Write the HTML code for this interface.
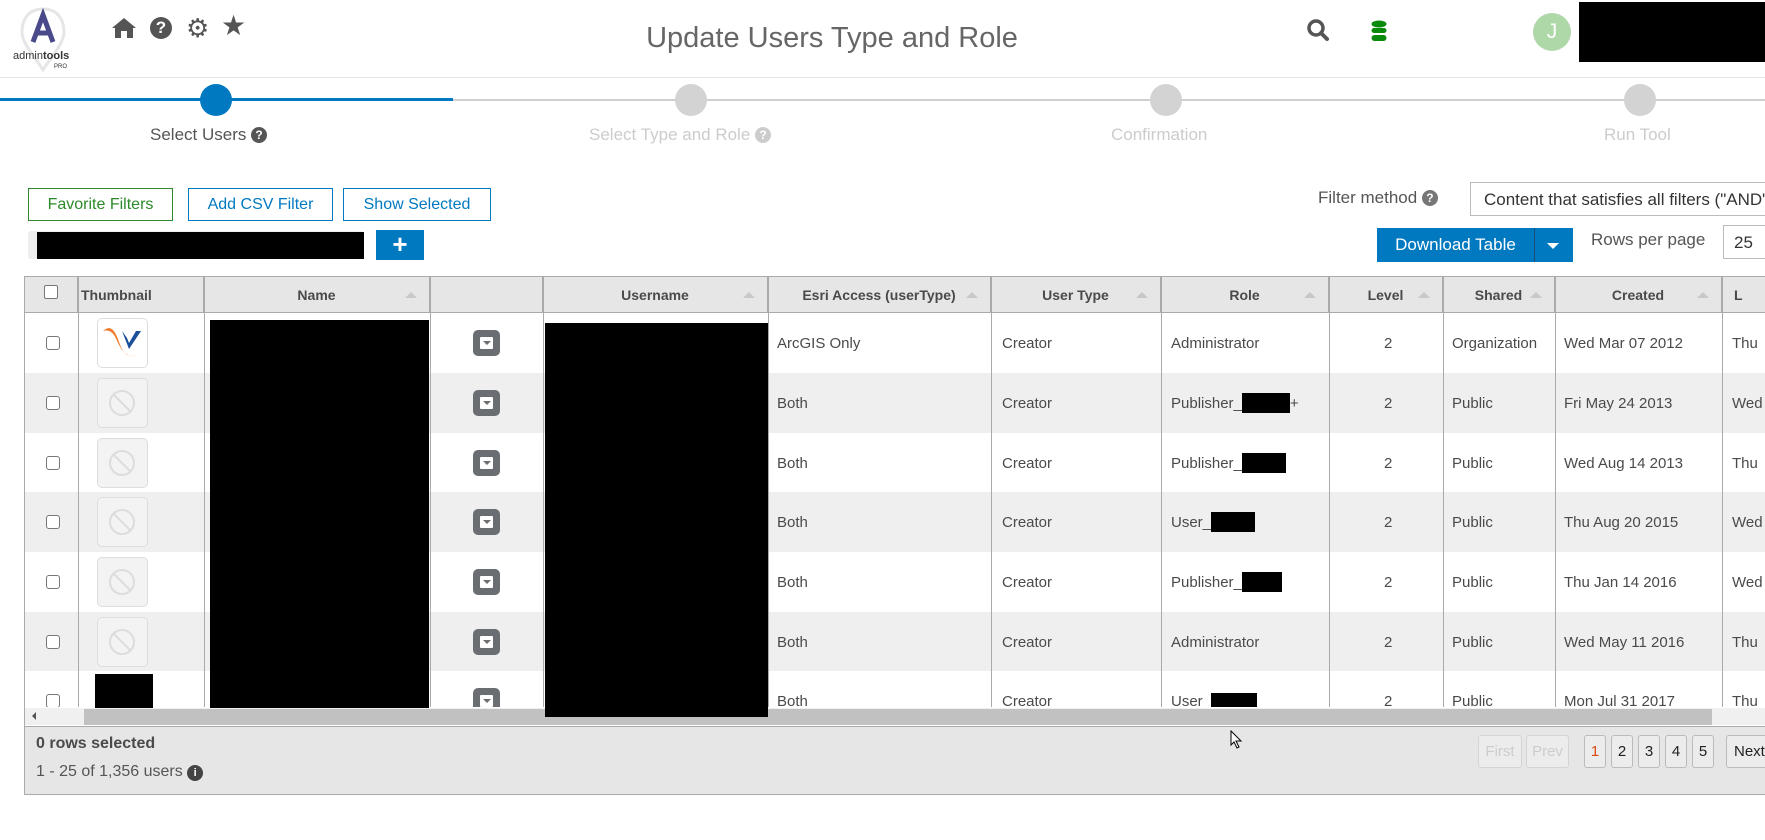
<!DOCTYPE html>
<html><head><meta charset="utf-8">
<style>
*{box-sizing:border-box;margin:0;padding:0}
body{width:1765px;height:840px;overflow:hidden;background:#fff;font-family:"Liberation Sans",sans-serif;color:#4a4a4a;position:relative}
.a{position:absolute}
.btn{position:absolute;border:1px solid #0079c1;color:#0079c1;font-size:16px;display:flex;align-items:center;justify-content:center;background:#fff}
.th{position:absolute;top:277px;height:35px;background:#e6e6e6;font-weight:bold;font-size:14px;color:#4a4a4a;display:flex;align-items:center;justify-content:center;border-right:1px solid #aaa}
.tri{position:absolute;right:12px;top:15px;width:0;height:0;border-left:6px solid transparent;border-right:6px solid transparent;border-bottom:6px solid #c8c8c8}
.row{position:absolute;left:25px;width:1740px;height:60px}
.c{position:absolute;font-size:15px;color:#4a4a4a;top:0;height:60px;display:flex;align-items:center}
.vl{position:absolute;top:277px;height:430px;width:1px;background:#aaa}
.cb{position:absolute;left:21px;top:23px;width:14px;height:14px;border:1px solid #777;border-radius:3px;background:#fff}
.thumb{position:absolute;left:72px;top:5px;width:51px;height:50px;border:1px solid #ddd;border-radius:5px;background:#f3f3f3}
.dd{position:absolute;left:448px;top:17px;width:27px;height:26px;background:#6a6e73;border-radius:5px}
.dd:after{content:"";position:absolute;left:7px;top:7px;width:13px;height:12px;background:#fff;border-radius:1px}
.dd:before{content:"";position:absolute;left:10px;top:11px;z-index:2;border-left:4px solid transparent;border-right:4px solid transparent;border-top:4px solid #6a6e73}
.pg{position:absolute;top:735px;height:33px;border:1px solid #bbb;border-radius:3px;font-size:15px;display:flex;align-items:center;justify-content:center;background:#ececec;color:#222}
.red{position:absolute;background:#000}
</style></head><body>
<svg class="a" style="left:12px;top:6px" width="62" height="66" viewBox="0 0 62 66">
<path d="M31 3 C16 3 10 14 10 26 C10 38 24 52 31 64 C38 52 52 38 52 26 C52 14 46 3 31 3Z" fill="none" stroke="#e6e6e6" stroke-width="3"/>
<path d="M21 36 L31 9 L41 36 M25 27 L37 27" fill="none" stroke="#4a4a8a" stroke-width="5"/>
<text x="1" y="53" font-size="11" fill="#333" font-family="Liberation Sans">admin<tspan font-weight="bold">tools</tspan></text>
<text x="42" y="62" font-size="6" fill="#333" font-family="Liberation Sans">PRO</text>
</svg>
<svg class="a" style="left:111px;top:17px" width="26" height="22" viewBox="0 0 26 22"><path d="M13 1 L1 11 L4 11 L4 21 L10 21 L10 14 L16 14 L16 21 L22 21 L22 11 L25 11Z" fill="#555"/></svg>
<div class="a" style="left:150px;top:17px;width:22px;height:22px;border-radius:50%;background:#555;color:#fff;font-weight:bold;font-size:17px;text-align:center;line-height:22px">?</div>
<div class="a" style="left:186px;top:14px;font-size:26px;color:#555;line-height:28px">⚙</div>
<div class="a" style="left:221px;top:11px;font-size:28px;color:#555;line-height:30px">★</div>
<div class="a" style="left:0;top:22px;width:1664px;text-align:center;font-size:29px;color:#666">Update Users Type and Role</div>
<svg class="a" style="left:1306px;top:18px" width="24" height="24" viewBox="0 0 24 24"><circle cx="10" cy="10" r="7" fill="none" stroke="#555" stroke-width="3.5"/><path d="M15 15 L21 21" stroke="#555" stroke-width="4" stroke-linecap="round"/></svg>
<svg class="a" style="left:1371px;top:20px" width="16" height="22" viewBox="0 0 16 22"><ellipse cx="8" cy="4" rx="7.5" ry="3.5" fill="#0a8a0a"/><rect x="0.5" y="8" width="15" height="5" rx="2.5" fill="#0a8a0a"/><rect x="0.5" y="15" width="15" height="6" rx="3" fill="#0a8a0a"/></svg>
<div class="a" style="left:1533px;top:13px;width:38px;height:38px;border-radius:50%;background:#afd8a8;color:#fff;font-size:21px;text-align:center;line-height:38px">J</div>
<div class="red" style="left:1579px;top:2px;width:186px;height:60px"></div>
<div class="a" style="left:0;top:77px;width:1765px;height:1px;background:#e4e4e4"></div>
<div class="a" style="left:0;top:99px;width:1765px;height:2px;background:#d0d0d0"></div>
<div class="a" style="left:0;top:98px;width:453px;height:3px;background:#0079c1"></div>
<div class="a" style="left:200px;top:84px;width:32px;height:32px;border-radius:50%;background:#0079c1"></div>
<div class="a" style="left:675px;top:84px;width:32px;height:32px;border-radius:50%;background:#d3d3d3"></div>
<div class="a" style="left:1150px;top:84px;width:32px;height:32px;border-radius:50%;background:#d3d3d3"></div>
<div class="a" style="left:1624px;top:84px;width:32px;height:32px;border-radius:50%;background:#d3d3d3"></div>
<div class="a" style="left:150px;top:125px;font-size:17px;color:#555">Select Users <span style="display:inline-block;width:16px;height:16px;border-radius:50%;background:#555;color:#fff;font-size:12px;text-align:center;line-height:16px;font-weight:bold;vertical-align:1px">?</span></div>
<div class="a" style="left:589px;top:125px;font-size:17px;color:#ccc">Select Type and Role <span style="display:inline-block;width:16px;height:16px;border-radius:50%;background:#ccc;color:#fff;font-size:12px;text-align:center;line-height:16px;font-weight:bold;vertical-align:1px">?</span></div>
<div class="a" style="left:1111px;top:125px;font-size:17px;color:#ccc">Confirmation</div>
<div class="a" style="left:1604px;top:125px;font-size:17px;color:#ccc">Run Tool</div>
<div class="btn" style="left:28px;top:188px;width:145px;height:33px;border-color:#2a8a2a;color:#2a8a2a">Favorite Filters</div>
<div class="btn" style="left:188px;top:188px;width:145px;height:33px">Add CSV Filter</div>
<div class="btn" style="left:343px;top:188px;width:148px;height:33px">Show Selected</div>
<div class="a" style="left:1318px;top:188px;font-size:17px;color:#555">Filter method <span style="display:inline-block;width:16px;height:16px;border-radius:50%;background:#777;color:#fff;font-size:12px;text-align:center;line-height:16px;font-weight:bold;vertical-align:1px">?</span></div>
<div class="a" style="left:1470px;top:182px;width:300px;height:34px;border:1px solid #bbb;font-size:17px;color:#333;padding:7px 0 0 13px;white-space:nowrap">Content that satisfies all filters ("AND")</div>
<div class="a" style="left:28px;top:231px;width:336px;height:28px;background:#eee;border-radius:3px"></div>
<div class="red" style="left:37px;top:232px;width:327px;height:27px"></div>
<div class="a" style="left:376px;top:230px;width:48px;height:30px;background:#0079c1;color:#fff;font-size:26px;font-weight:bold;text-align:center;line-height:28px">+</div>
<div class="a" style="left:1377px;top:228px;width:196px;height:34px;background:#0079c1"></div>
<div class="a" style="left:1377px;top:228px;width:157px;height:34px;color:#fff;font-size:17px;text-align:center;line-height:34px">Download Table</div>
<div class="a" style="left:1534px;top:228px;width:1px;height:34px;background:#1a4f7a"></div>
<div class="a" style="left:1547px;top:243px;border-left:6px solid transparent;border-right:6px solid transparent;border-top:6px solid #fff"></div>
<div class="a" style="left:1591px;top:230px;font-size:17px;color:#555">Rows per page</div>
<div class="a" style="left:1723px;top:225px;width:60px;height:34px;border:1px solid #bbb;font-size:17px;color:#333;padding:7px 0 0 10px">25</div>
<div class="a" style="left:24px;top:276px;width:1741px;height:519px;border:1px solid #aaa;border-right:none"></div>
<div class="th" style="left:25px;width:53px"><div class="cb" style="left:19px;top:8px;width:14px;height:14px;border-radius:2px"></div></div>
<div class="th" style="left:78px;width:126px;justify-content:flex-start;padding-left:3px">Thumbnail</div>
<div class="th" style="left:204px;width:226px">Name<span class="tri"></span></div>
<div class="th" style="left:430px;width:113px"></div>
<div class="th" style="left:543px;width:225px">Username<span class="tri"></span></div>
<div class="th" style="left:768px;width:223px">Esri Access (userType)<span class="tri"></span></div>
<div class="th" style="left:991px;width:170px">User Type<span class="tri"></span></div>
<div class="th" style="left:1161px;width:168px">Role<span class="tri"></span></div>
<div class="th" style="left:1329px;width:114px">Level<span class="tri"></span></div>
<div class="th" style="left:1443px;width:112px">Shared<span class="tri"></span></div>
<div class="th" style="left:1555px;width:167px">Created<span class="tri"></span></div>
<div class="th" style="left:1722px;width:50px;justify-content:flex-start;padding-left:12px">L</div>
<div class="a" style="left:25px;top:312px;width:1740px;height:1px;background:#aaa"></div>

<div class="a" style="left:0;top:313px;width:1765px;height:394px;overflow:hidden">
<div class="row" style="top:0;background:#fff"><div class="cb"></div><div class="thumb" style="background:#fff"><svg width="49" height="48" viewBox="0 0 49 48"><path d="M5 12 C12 6 16 10 20 20 C24 32 28 40 38 36 C30 40 24 32 20 24 C16 14 12 10 5 12Z" fill="#f07c2e"/><path d="M24 12 L31 30 L43 12 L38 12 L31 24 L29 19Z" fill="#1a4f9a"/></svg></div><div class="dd"></div>
<div class="c" style="left:752px">ArcGIS Only</div><div class="c" style="left:977px">Creator</div><div class="c" style="left:1146px">Administrator</div><div class="c" style="left:1359px">2</div><div class="c" style="left:1427px">Organization</div><div class="c" style="left:1539px">Wed Mar 07 2012</div><div class="c" style="left:1707px">Thu</div></div>
<div class="row" style="top:60px;background:#efefef"><div class="cb"></div><div class="thumb"><svg width="49" height="48"><circle cx="24" cy="24" r="12" fill="none" stroke="#dcdcdc" stroke-width="2"/><path d="M16 16 L32 32" stroke="#dcdcdc" stroke-width="2"/></svg></div><div class="dd"></div>
<div class="c" style="left:752px">Both</div><div class="c" style="left:977px">Creator</div><div class="c" style="left:1146px">Publisher_<span style="display:inline-block;width:48px;height:20px;background:#000"></span>+</div><div class="c" style="left:1359px">2</div><div class="c" style="left:1427px">Public</div><div class="c" style="left:1539px">Fri May 24 2013</div><div class="c" style="left:1707px">Wed</div></div>
<div class="row" style="top:120px;background:#fff"><div class="cb"></div><div class="thumb"><svg width="49" height="48"><circle cx="24" cy="24" r="12" fill="none" stroke="#dcdcdc" stroke-width="2"/><path d="M16 16 L32 32" stroke="#dcdcdc" stroke-width="2"/></svg></div><div class="dd"></div>
<div class="c" style="left:752px">Both</div><div class="c" style="left:977px">Creator</div><div class="c" style="left:1146px">Publisher_<span style="display:inline-block;width:44px;height:20px;background:#000"></span></div><div class="c" style="left:1359px">2</div><div class="c" style="left:1427px">Public</div><div class="c" style="left:1539px">Wed Aug 14 2013</div><div class="c" style="left:1707px">Thu</div></div>
<div class="row" style="top:179px;background:#efefef"><div class="cb"></div><div class="thumb"><svg width="49" height="48"><circle cx="24" cy="24" r="12" fill="none" stroke="#dcdcdc" stroke-width="2"/><path d="M16 16 L32 32" stroke="#dcdcdc" stroke-width="2"/></svg></div><div class="dd"></div>
<div class="c" style="left:752px">Both</div><div class="c" style="left:977px">Creator</div><div class="c" style="left:1146px">User_<span style="display:inline-block;width:44px;height:20px;background:#000"></span></div><div class="c" style="left:1359px">2</div><div class="c" style="left:1427px">Public</div><div class="c" style="left:1539px">Thu Aug 20 2015</div><div class="c" style="left:1707px">Wed</div></div>
<div class="row" style="top:239px;background:#fff"><div class="cb"></div><div class="thumb"><svg width="49" height="48"><circle cx="24" cy="24" r="12" fill="none" stroke="#dcdcdc" stroke-width="2"/><path d="M16 16 L32 32" stroke="#dcdcdc" stroke-width="2"/></svg></div><div class="dd"></div>
<div class="c" style="left:752px">Both</div><div class="c" style="left:977px">Creator</div><div class="c" style="left:1146px">Publisher_<span style="display:inline-block;width:40px;height:20px;background:#000"></span></div><div class="c" style="left:1359px">2</div><div class="c" style="left:1427px">Public</div><div class="c" style="left:1539px">Thu Jan 14 2016</div><div class="c" style="left:1707px">Wed</div></div>
<div class="row" style="top:299px;background:#efefef"><div class="cb"></div><div class="thumb"><svg width="49" height="48"><circle cx="24" cy="24" r="12" fill="none" stroke="#dcdcdc" stroke-width="2"/><path d="M16 16 L32 32" stroke="#dcdcdc" stroke-width="2"/></svg></div><div class="dd"></div>
<div class="c" style="left:752px">Both</div><div class="c" style="left:977px">Creator</div><div class="c" style="left:1146px">Administrator</div><div class="c" style="left:1359px">2</div><div class="c" style="left:1427px">Public</div><div class="c" style="left:1539px">Wed May 11 2016</div><div class="c" style="left:1707px">Thu</div></div>
<div class="row" style="top:358px;background:#fff"><div class="cb"></div><div class="dd"></div>
<div class="c" style="left:752px">Both</div><div class="c" style="left:977px">Creator</div><div class="c" style="left:1146px">User_<span style="display:inline-block;width:46px;height:16px;background:#000"></span></div><div class="c" style="left:1359px">2</div><div class="c" style="left:1427px">Public</div><div class="c" style="left:1539px">Mon Jul 31 2017</div><div class="c" style="left:1707px">Thu</div></div>
</div>
<div class="vl" style="left:78px"></div><div class="vl" style="left:204px"></div><div class="vl" style="left:430px"></div><div class="vl" style="left:543px"></div><div class="vl" style="left:768px"></div><div class="vl" style="left:991px"></div><div class="vl" style="left:1161px"></div><div class="vl" style="left:1329px"></div><div class="vl" style="left:1443px"></div><div class="vl" style="left:1555px"></div><div class="vl" style="left:1722px"></div>
<div class="red" style="left:95px;top:674px;width:58px;height:34px"></div>
<div class="red" style="left:210px;top:320px;width:219px;height:389px"></div>
<div class="a" style="left:25px;top:708px;width:1740px;height:17px;background:#f0f0f0"></div>
<div class="a" style="left:84px;top:709px;width:1628px;height:16px;background:#c1c1c1"></div>
<div class="a" style="left:32px;top:712px;border-top:4px solid transparent;border-bottom:4px solid transparent;border-right:4px solid #555"></div>
<div class="red" style="left:545px;top:323px;width:223px;height:394px"></div>
<div class="a" style="left:25px;top:726px;width:1740px;height:68px;background:#e6e6e6;border-top:1px solid #aaa"></div>
<div class="a" style="left:36px;top:735px;font-size:16px;font-weight:bold;color:#4a4a4a">0 rows selected</div>
<div class="a" style="left:36px;top:763px;font-size:16px;color:#555">1 - 25 of 1,356 users <span style="display:inline-block;width:16px;height:16px;border-radius:50%;background:#444;color:#fff;font-size:11px;text-align:center;line-height:16px;font-weight:bold;vertical-align:0">i</span></div>
<div class="pg" style="left:1478px;width:44px;color:#ccc;border-color:#d4d4d4">First</div>
<div class="pg" style="left:1526px;width:43px;color:#ccc;border-color:#d4d4d4">Prev</div>
<div class="pg" style="left:1584px;width:22px;color:#e04a10">1</div>
<div class="pg" style="left:1611px;width:22px">2</div>
<div class="pg" style="left:1638px;width:22px">3</div>
<div class="pg" style="left:1665px;width:22px">4</div>
<div class="pg" style="left:1692px;width:22px">5</div>
<div class="pg" style="left:1726px;width:50px;justify-content:flex-start;padding-left:7px">Next</div>
<svg class="a" style="left:1230px;top:730px" width="14" height="20" viewBox="0 0 14 20"><path d="M1 1 L1 15 L4 12 L7 18 L9 17 L6 11 L11 11Z" fill="#fff" stroke="#000" stroke-width="1"/></svg>
</body></html>
